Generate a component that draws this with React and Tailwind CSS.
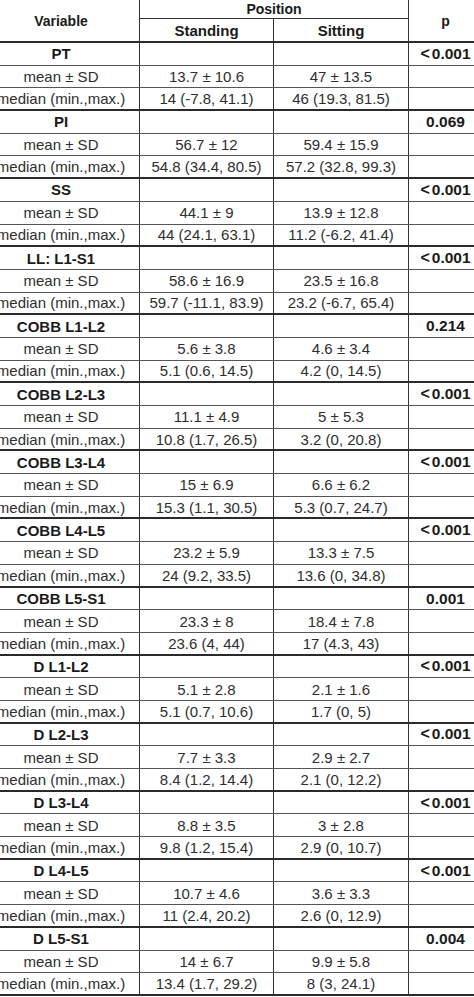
import React from 'react';

const groups = [
  ['PT', '<0.001', '13.7 ± 10.6', '47 ± 13.5', '14 (-7.8, 41.1)', '46 (19.3, 81.5)'],
  ['PI', '0.069', '56.7 ± 12', '59.4 ± 15.9', '54.8 (34.4, 80.5)', '57.2 (32.8, 99.3)'],
  ['SS', '<0.001', '44.1 ± 9', '13.9 ± 12.8', '44 (24.1, 63.1)', '11.2 (-6.2, 41.4)'],
  ['LL: L1-S1', '<0.001', '58.6 ± 16.9', '23.5 ± 16.8', '59.7 (-11.1, 83.9)', '23.2 (-6.7, 65.4)'],
  ['COBB L1-L2', '0.214', '5.6 ± 3.8', '4.6 ± 3.4', '5.1 (0.6, 14.5)', '4.2 (0, 14.5)'],
  ['COBB L2-L3', '<0.001', '11.1 ± 4.9', '5 ± 5.3', '10.8 (1.7, 26.5)', '3.2 (0, 20.8)'],
  ['COBB L3-L4', '<0.001', '15 ± 6.9', '6.6 ± 6.2', '15.3 (1.1, 30.5)', '5.3 (0.7, 24.7)'],
  ['COBB L4-L5', '<0.001', '23.2 ± 5.9', '13.3 ± 7.5', '24 (9.2, 33.5)', '13.6 (0, 34.8)'],
  ['COBB L5-S1', '0.001', '23.3 ± 8', '18.4 ± 7.8', '23.6 (4, 44)', '17 (4.3, 43)'],
  ['D L1-L2', '<0.001', '5.1 ± 2.8', '2.1 ± 1.6', '5.1 (0.7, 10.6)', '1.7 (0, 5)'],
  ['D L2-L3', '<0.001', '7.7 ± 3.3', '2.9 ± 2.7', '8.4 (1.2, 14.4)', '2.1 (0, 12.2)'],
  ['D L3-L4', '<0.001', '8.8 ± 3.5', '3 ± 2.8', '9.8 (1.2, 15.4)', '2.9 (0, 10.7)'],
  ['D L4-L5', '<0.001', '10.7 ± 4.6', '3.6 ± 3.3', '11 (2.4, 20.2)', '2.6 (0, 12.9)'],
  ['D L5-S1', '0.004', '14 ± 6.7', '9.9 ± 5.8', '13.4 (1.7, 29.2)', '8 (3, 24.1)'],
];

const cols = 'grid grid-cols-[157px_134px_135px_73px]';
const cell = 'flex items-center justify-center whitespace-nowrap overflow-visible';

const PValue = ({ value }) => {
  if (value.startsWith('<')) {
    return (
      <span>
        <span className="mr-[2px] text-[16px]">&lt;</span>
        {value.slice(1)}
      </span>
    );
  }
  return <span>{value}</span>;
};

const Row = ({ cells, bold, last }) => (
  <div className={`${cols} h-[22.7px] ${last ? 'border-b-2 border-[#2a2a2a]' : 'border-b border-[#555]'}`}>
    <div className={`${cell} border-r border-[#333] ${bold ? 'font-bold text-[#1a1a1a]' : ''}`}>{cells[0]}</div>
    <div className={`${cell} border-r border-[#333]`}>{cells[1]}</div>
    <div className={`${cell} border-r border-[#333]`}>{cells[2]}</div>
    <div className={`${cell} font-bold text-[#1a1a1a] text-[15.5px]`}>{cells[3] && <PValue value={cells[3]} />}</div>
  </div>
);

export default function App() {
  return (
    <div className="w-[474px] h-[997px] overflow-hidden bg-white">
      <div
        className="ml-[-17px] w-[499px] text-[15px] text-[#2e2e2e] leading-none"
        style={{ fontFamily: '"Liberation Sans", Arial, sans-serif' }}
      >
        <div className={`${cols} grid-rows-[19px_22px] border-b-2 border-[#2a2a2a]`}>
          <div className={`${cell} row-span-2 border-r border-[#333] font-bold text-[#1a1a1a] text-[14px]`}>Variable</div>
          <div className={`${cell} col-span-2 border-r border-b border-[#333] font-bold text-[#1a1a1a] text-[14px]`}>Position</div>
          <div className={`${cell} row-span-2 font-bold text-[#1a1a1a] text-[14px]`}>p</div>
          <div className={`${cell} border-r border-[#333] font-bold text-[#1a1a1a]`}>Standing</div>
          <div className={`${cell} border-r border-[#333] font-bold text-[#1a1a1a]`}>Sitting</div>
        </div>
        {groups.map(([name, p, m1, m2, d1, d2]) => (
          <div key={name}>
            <Row cells={[name, '', '', p]} bold />
            <Row cells={['mean ± SD', m1, m2, '']} />
            <Row cells={['median (min.,max.)', d1, d2, '']} last />
          </div>
        ))}
      </div>
    </div>
  );
}
